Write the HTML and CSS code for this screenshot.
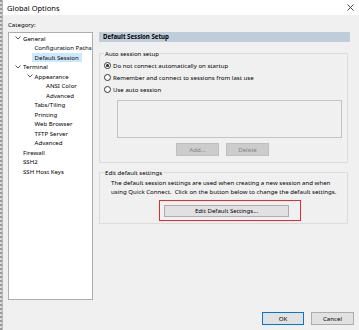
FILE: index.html
```html
<!DOCTYPE html>
<html>
<head>
<meta charset="utf-8">
<link rel="stylesheet" href="styles.css">
</head>
<body>
<div class="screen">
  <div class="strip"></div>
  <div class="window">
    <div class="titlebar">
      <span class="title">Global Options</span>
      <svg class="close" width="7" height="7" viewBox="0 0 7 7"><path d="M0.5 0.5L6.5 6.5M6.5 0.5L0.5 6.5" stroke="#333" stroke-width="0.9"/></svg>
    </div>
    <div class="content">
      <div class="cat-label">Category:</div>
      <div class="cols">
        <div class="tree">
          <div class="row l0"><span class="chev"><svg width="6" height="4" viewBox="0 0 6 4"><path d="M0.5 0.5L3 3L5.5 0.5" fill="none" stroke="#444" stroke-width="0.9"/></svg></span><span class="txt">General</span></div>
          <div class="row l1"><span class="chev"></span><span class="txt">Configuration Paths</span></div>
          <div class="row l1"><span class="chev"></span><span class="txt sel">Default Session</span></div>
          <div class="row l0"><span class="chev"><svg width="6" height="4" viewBox="0 0 6 4"><path d="M0.5 0.5L3 3L5.5 0.5" fill="none" stroke="#444" stroke-width="0.9"/></svg></span><span class="txt">Terminal</span></div>
          <div class="row l1"><span class="chev"><svg width="6" height="4" viewBox="0 0 6 4"><path d="M0.5 0.5L3 3L5.5 0.5" fill="none" stroke="#444" stroke-width="0.9"/></svg></span><span class="txt">Appearance</span></div>
          <div class="row l2"><span class="chev"></span><span class="txt">ANSI Color</span></div>
          <div class="row l2"><span class="chev"></span><span class="txt">Advanced</span></div>
          <div class="row l1"><span class="chev"></span><span class="txt">Tabs/Tiling</span></div>
          <div class="row l1"><span class="chev"></span><span class="txt">Printing</span></div>
          <div class="row l1"><span class="chev"></span><span class="txt">Web Browser</span></div>
          <div class="row l1"><span class="chev"></span><span class="txt">TFTP Server</span></div>
          <div class="row l1"><span class="chev"></span><span class="txt">Advanced</span></div>
          <div class="row l0"><span class="chev"></span><span class="txt">Firewall</span></div>
          <div class="row l0"><span class="chev"></span><span class="txt">SSH2</span></div>
          <div class="row l0"><span class="chev"></span><span class="txt">SSH Host Keys</span></div>
        </div>
        <div class="right">
          <div class="header">Default Session Setup</div>
          <div class="group g1">
            <div class="legend">Auto session setup</div>
            <div class="radios">
              <div class="radio-row"><span class="radio checked"></span><span>Do not connect automatically on startup</span></div>
              <div class="radio-row"><span class="radio"></span><span>Remember and connect to sessions from last use</span></div>
              <div class="radio-row"><span class="radio"></span><span>Use auto session</span></div>
            </div>
            <div class="listbox"></div>
            <div class="list-buttons">
              <div class="btn disabled">Add...</div>
              <div class="btn disabled">Delete</div>
            </div>
          </div>
          <div class="group g2">
            <div class="legend">Edit default settings</div>
            <div class="desc">The default session settings are used when creating a new session and when<br>using Quick Connect.&nbsp; Click on the button below to change the default settings.</div>
            <div class="redbox"><div class="btn edit">Edit Default Settings...</div></div>
          </div>
        </div>
      </div>
      <div class="footer">
        <div class="btn ok">OK</div>
        <div class="btn cancel">Cancel</div>
      </div>
    </div>
  </div>
</div>
</body>
</html>
```

FILE: styles.css
```css
* { box-sizing: border-box; }
html, body { margin: 0; padding: 0; }
body {
  width: 359px;
  height: 330px;
  overflow: hidden;
  background: #f0f0f0;
  font-family: "Noto Sans", "Open Sans", sans-serif;
  font-size: 6.1px;
  color: #000;
}
.screen { display: flex; width: 359px; height: 330px; }
.strip {
  flex: none;
  width: 3px;
  background: repeating-linear-gradient(to bottom, #9a9a9a 0 2px, #d8d8d8 2px 4px);
  border-right: 1px solid #b8b8b8;
}
.window { flex: 1; display: flex; flex-direction: column; background: #f0f0f0; }
.titlebar {
  height: 15px;
  background: #fff;
  display: flex;
  align-items: center;
  justify-content: space-between;
  padding: 0 5px 0 4px;
}
.title { font-size: 7.5px; color: #000; line-height: 10px; }
.close { display: block; }
.content { padding: 5px 0 0 5px; flex: 1; display: flex; flex-direction: column; }
.cat-label { height: 10px; line-height: 10px; margin-bottom: 2px; }
.cols { display: flex; gap: 6px; }
.tree {
  width: 85px;
  height: 268px;
  background: #fff;
  border: 1px solid #abadb3;
  padding-top: 0.5px;
  flex: none;
}
.row { height: 9.5px; display: flex; align-items: center; padding-left: 3px; white-space: nowrap; }
.row.l1 { padding-left: 14.5px; }
.row.l2 { padding-left: 26px; }
.chev { width: 11px; flex: none; display: flex; align-items: center; padding-left: 3px; }
.chev svg { display: block; }
.txt { line-height: 9.5px; }
.txt.sel { background: #cce8ff; margin-left: -3px; padding: 0 3px; }
.right { width: 251px; flex: none; }
.header {
  height: 10px;
  line-height: 10px;
  background: #bfcddb;
  font-weight: bold;
  padding-left: 4px;
}
.group { border: 1px solid #dcdcdc; width: 249px; padding: 0 0 6px 4px; }
.g1 { margin-top: 11px; }
.g2 { margin-top: 9px; padding-bottom: 2px; }
.legend {
  height: 9px;
  line-height: 9px;
  margin-top: -5px;
  padding: 0 1px;
  background: #f0f0f0;
  width: fit-content;
}
.radios { margin-top: 1px; }
.radio-row { height: 12px; display: flex; align-items: center; gap: 2px; }
.radio {
  width: 7px; height: 7px;
  border: 1px solid #333;
  border-radius: 50%;
  background: #fff;
  flex: none;
  display: flex; align-items: center; justify-content: center;
}
.radio.checked::after {
  content: "";
  width: 3px; height: 3px;
  border-radius: 50%;
  background: #222;
}
.listbox {
  margin: 5px 0 0 13px;
  width: 225px;
  height: 38px;
  border: 1px solid #c4c4c4;
  background: #f0f0f0;
}
.list-buttons { display: flex; gap: 7px; margin: 5px 0 0 72px; }
.btn {
  height: 13px;
  line-height: 11px;
  text-align: center;
  border: 1px solid #adadad;
  background: #e1e1e1;
}
.btn.disabled { width: 43px; background: #cccccc; border-color: #bfbfbf; color: #838383; }
.desc { margin: 1px 0 0 7px; line-height: 9px; white-space: nowrap; }
.redbox {
  margin: 4px 0 0 55px;
  width: 142px;
  height: 21px;
  border: 1px solid #e8292d;
  padding: 4px 0 0 4px;
}
.btn.edit { width: 125px; height: 12px; line-height: 10px; }
.footer { display: flex; justify-content: flex-end; gap: 7px; margin-top: 12px; padding-right: 5px; }
.btn.ok { width: 42px; border-color: #0078d7; }
.btn.cancel { width: 43px; }
```
